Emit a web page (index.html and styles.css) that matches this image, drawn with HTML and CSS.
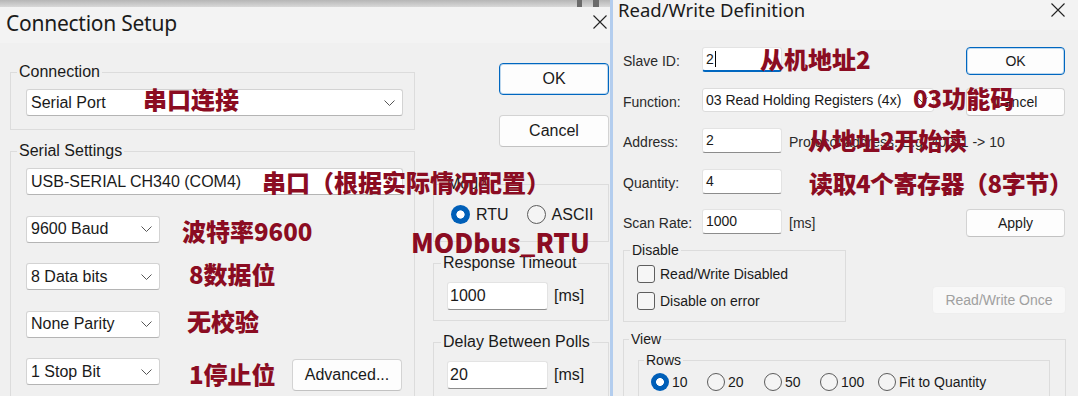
FILE: index.html
```html
<!DOCTYPE html>
<html lang="en">
<head>
    <meta charset="UTF-8">
    <meta name="viewport" content="width=device-width, initial-scale=1.0">
    <title>Modbus Poll - Connection Setup</title>
    <link rel="stylesheet" href="styles.css">
</head>
<body>
<div class="desk">
    <!-- window behind the dialogs -->
    <span class="behind-bar bar-a"></span>
    <span class="behind-bar bar-b"></span>

    <!-- Connection Setup dialog -->
    <section class="dlg conn">
        <header class="titlebar">
            <h1>Connection Setup</h1>
            <svg class="close" width="14" height="14" viewBox="0 0 14 14">
                <path d="M0.5 0.5 L13.5 13.5 M13.5 0.5 L0.5 13.5" stroke="#222" stroke-width="1.1" fill="none"/>
            </svg>
        </header>

        <div class="conn-body">
            <div class="col-left">
                <fieldset class="group g-connection">
                    <legend>Connection</legend>
                    <div class="select wide">
                        <span>Serial Port</span>
                        <svg class="chev" width="11" height="6" viewBox="0 0 11 6"><path d="M0.5 0.5 L5.5 5.5 L10.5 0.5" stroke="#555" fill="none"/></svg>
                    </div>
                </fieldset>

                <fieldset class="group g-serial">
                    <legend>Serial Settings</legend>
                    <div class="select wide">
                        <span>USB-SERIAL CH340 (COM4)</span>
                    </div>
                    <div class="select short">
                        <span>9600 Baud</span>
                        <svg class="chev" width="11" height="6" viewBox="0 0 11 6"><path d="M0.5 0.5 L5.5 5.5 L10.5 0.5" stroke="#555" fill="none"/></svg>
                    </div>
                    <div class="select short">
                        <span>8 Data bits</span>
                        <svg class="chev" width="11" height="6" viewBox="0 0 11 6"><path d="M0.5 0.5 L5.5 5.5 L10.5 0.5" stroke="#555" fill="none"/></svg>
                    </div>
                    <div class="select short">
                        <span>None Parity</span>
                        <svg class="chev" width="11" height="6" viewBox="0 0 11 6"><path d="M0.5 0.5 L5.5 5.5 L10.5 0.5" stroke="#555" fill="none"/></svg>
                    </div>
                    <div class="stop-row">
                        <div class="select short">
                            <span>1 Stop Bit</span>
                            <svg class="chev" width="11" height="6" viewBox="0 0 11 6"><path d="M0.5 0.5 L5.5 5.5 L10.5 0.5" stroke="#555" fill="none"/></svg>
                        </div>
                        <button class="btn adv">Advanced...</button>
                    </div>
                </fieldset>
            </div>

            <div class="col-right">
                <button class="btn primary">OK</button>
                <button class="btn">Cancel</button>

                <fieldset class="group g-mode">
                    <legend>Mode</legend>
                    <div class="radios">
                        <label class="radio"><span class="dot on"></span>RTU</label>
                        <label class="radio"><span class="dot"></span>ASCII</label>
                    </div>
                </fieldset>

                <fieldset class="group g-time">
                    <legend>Response Timeout</legend>
                    <div class="field-row">
                        <div class="textbox">1000</div>
                        <span>[ms]</span>
                    </div>
                </fieldset>

                <fieldset class="group g-time">
                    <legend>Delay Between Polls</legend>
                    <div class="field-row">
                        <div class="textbox">20</div>
                        <span>[ms]</span>
                    </div>
                </fieldset>
            </div>
        </div>
    </section>

    <!-- Read/Write Definition dialog -->
    <section class="dlg rw">
        <header class="titlebar">
            <h2>Read/Write Definition</h2>
            <svg class="close" width="14" height="14" viewBox="0 0 14 14">
                <path d="M0.5 0.5 L13.5 13.5 M13.5 0.5 L0.5 13.5" stroke="#222" stroke-width="1.1" fill="none"/>
            </svg>
        </header>

        <div class="rw-body">
            <div class="form">
                <span class="lbl">Slave ID:</span>
                <div class="cell"><div class="textbox focus">2<i class="caret"></i></div></div>
                <button class="btn primary">OK</button>

                <span class="lbl">Function:</span>
                <div class="cell">
                    <div class="select func">
                        <span>03 Read Holding Registers (4x)</span>
                        <svg class="chev" width="11" height="6" viewBox="0 0 11 6"><path d="M0.5 0.5 L5.5 5.5 L10.5 0.5" stroke="#555" fill="none"/></svg>
                    </div>
                </div>
                <button class="btn">Cancel</button>

                <span class="lbl">Address:</span>
                <div class="cell"><div class="textbox">2</div><span class="hint">Protocol address. E.g. 40011 -&gt; 10</span></div>
                <span></span>

                <span class="lbl">Quantity:</span>
                <div class="cell"><div class="textbox">4</div></div>
                <span></span>

                <span class="lbl">Scan Rate:</span>
                <div class="cell"><div class="textbox">1000</div><span class="hint">[ms]</span></div>
                <button class="btn">Apply</button>
            </div>

            <div class="rw-lower">
                <fieldset class="group g-disable">
                    <legend>Disable</legend>
                    <label class="check"><span class="box"></span>Read/Write Disabled</label>
                    <label class="check"><span class="box"></span>Disable on error</label>
                </fieldset>
                <button class="btn disabled">Read/Write Once</button>
            </div>

            <fieldset class="group g-view">
                <legend>View</legend>
                <fieldset class="group g-rows">
                    <legend>Rows</legend>
                    <div class="row-radios">
                        <label class="radio"><span class="dot on"></span>10</label>
                        <label class="radio"><span class="dot"></span>20</label>
                        <label class="radio"><span class="dot"></span>50</label>
                        <label class="radio"><span class="dot"></span>100</label>
                        <label class="radio"><span class="dot"></span>Fit to Quantity</label>
                    </div>
                </fieldset>
            </fieldset>
        </div>
    </section>

    <!-- red annotations written over the screenshot -->
    <span class="note n-port">串口连接</span>
    <span class="note n-com">串口（根据实际情况配置）</span>
    <span class="note n-baud">波特率9600</span>
    <span class="note n-data">8数据位</span>
    <span class="note n-parity">无校验</span>
    <span class="note n-stop">1停止位</span>
    <span class="note n-mode">MODbus_RTU</span>
    <span class="note n-slave">从机地址2</span>
    <span class="note n-func">03功能码</span>
    <span class="note n-addr">从地址2开始读</span>
    <span class="note n-qty">读取4个寄存器（8字节）</span>
</div>
</body>
</html>
```

FILE: styles.css
```css
* {
    box-sizing: border-box;
}

body {
    margin: 0;
    background: #e6e6e6;
    font-family: "Liberation Sans", Arial, sans-serif;
}

.desk {
    position: relative;
    width: 1078px;
    height: 396px;
    overflow: hidden;
    background: linear-gradient(#b6b6b6, #d8d8d8 7px, #e6e6e6 7px);
}

.behind-bar {
    position: absolute;
    top: 0;
    height: 7px;
    background: #6b6b6b;
}

.bar-a { left: 577px; width: 5px; }
.bar-b { left: 593px; width: 6px; }

/* Dialog windows */
.dlg {
    position: absolute;
    background: #f0f0f0;
    color: #1a1a1a;
}

.titlebar {
    display: flex;
    align-items: center;
    justify-content: space-between;
    background: #f3f3f3;
}

.close {
    align-self: flex-start;
    flex: none;
}

/* Buttons */
.btn {
    font-family: inherit;
    font-size: inherit;
    color: #1a1a1a;
    background: #fdfdfd;
    border: 1px solid #d3d3d3;
    border-bottom-color: #c2c2c2;
    border-radius: 4px;
    padding: 0;
}

.btn.primary {
    border: 1px solid #0067c0;
    box-shadow: inset 0 0 0 1px rgba(0, 103, 192, 0.25);
}

.btn.disabled {
    background: #f8f8f8;
    border-color: #eeeeee;
    color: #a0a0a0;
}

/* Group boxes */
.group {
    margin: 0;
    min-width: 0;
    border: 1px solid #dcdcdc;
    border-radius: 0;
}

.group legend {
    padding: 0 2px;
}

/* Inputs */
.select {
    display: flex;
    align-items: center;
    background: #fff;
    border: 1px solid #d3d3d3;
    border-bottom-color: #b4b4b4;
    border-radius: 3px;
    white-space: nowrap;
}

.select .chev {
    margin-left: auto;
    flex: none;
}

.textbox {
    flex: none;
    background: #fff;
    border: 1px solid #e3e3e3;
    border-bottom-color: #8c8c8c;
    border-radius: 3px;
    white-space: nowrap;
}

.textbox.focus {
    border-bottom: 2px solid #0067c0;
}

.caret {
    display: inline-block;
    width: 1px;
    height: 16px;
    margin-left: 1px;
    vertical-align: -3px;
    background: #000;
}

.radio,
.check {
    display: flex;
    align-items: center;
    white-space: nowrap;
}

.dot {
    flex: none;
    border-radius: 50%;
    border: 1px solid #5c5c5c;
    background: #f4f4f4;
}

.dot.on {
    border: none;
    background: radial-gradient(circle, #fff 0 3.6px, #005fb8 4.2px);
}

.box {
    flex: none;
    width: 18px;
    height: 18px;
    margin-right: 5px;
    border: 1px solid #5e5e5e;
    border-radius: 3px;
    background: #f6f6f6;
}

/* ---- Connection Setup ---- */
.conn {
    left: 0;
    top: 7px;
    width: 611px;
    height: 389px;
    font-size: 16px;
}

.conn .titlebar {
    height: 36px;
    padding: 0 4px 4px 6px;
}

.conn h1 {
    margin: 0;
    font: 400 21px/21px "Noto Sans", sans-serif;
    letter-spacing: -0.25px;
    color: #1b1b1b;
}

.conn .close {
    margin-top: 8px;
}

.conn-body {
    display: flex;
    gap: 18px;
    padding: 20px 0 0 10px;
}

.col-left {
    width: 405px;
}

.conn .group legend {
    line-height: 18px;
}

.g-connection {
    padding: 8px 11px 13px 15px;
}

.g-connection legend,
.g-serial legend {
    margin-left: -9px;
}

.g-serial {
    display: flex;
    flex-direction: column;
    align-items: flex-start;
    gap: 20.5px;
    margin-top: 12px;
    padding: 8px 11px 20px 15px;
}

.conn .select {
    height: 27px;
    padding: 0 7px 0 4px;
}

.select.wide {
    width: 377px;
}

.select.short {
    width: 134px;
}

.stop-row {
    display: flex;
    align-items: flex-start;
}

.btn.adv {
    width: 110px;
    height: 32px;
    margin: 1px 0 0 132px;
}

.col-right {
    width: 176px;
    display: flex;
    flex-direction: column;
}

.col-right .btn {
    align-self: flex-end;
    width: 110px;
    height: 32px;
}

.col-right .btn + .btn {
    margin-top: 20px;
}

.g-mode {
    margin-top: 28px;
    padding: 12px 8px 17px 17px;
}

.g-mode legend,
.g-time legend {
    margin-left: -6px;
}

.radios {
    display: flex;
    gap: 18px;
}

.conn .dot {
    width: 19px;
    height: 19px;
    margin-right: 6px;
}

.conn .dot.on {
    background: radial-gradient(circle, #fff 0 3.8px, #005fb8 4.4px);
}

.g-time {
    margin-top: 12px;
    padding: 10px 8px 10px 13px;
}

.field-row {
    display: flex;
    align-items: center;
    gap: 6px;
}

.conn .textbox {
    width: 101px;
    height: 28px;
    padding: 4px 0 0 2px;
}

/* ---- Read/Write Definition ---- */
.rw {
    left: 610px;
    top: 0;
    width: 468px;
    height: 396px;
    border-left: 3px solid #b3cdee;
    font-size: 14px;
}

.rw .titlebar {
    height: 30px;
    padding: 0 13px 10px 5px;
}

.rw h2 {
    margin: 0;
    font: 400 18.5px/18.5px "Noto Sans", sans-serif;
    color: #1b1b1b;
}

.rw .close {
    margin-top: 3px;
}

.rw-body {
    padding: 17px 12px 0 10px;
}

.form {
    display: grid;
    grid-template-columns: 79px 264px 99px;
    grid-template-rows: repeat(4, 40.5px) 29px;
    align-items: start;
}

.lbl {
    line-height: 29px;
    color: #2a2a2a;
}

.cell {
    display: flex;
    align-items: flex-start;
    gap: 7px;
}

.hint {
    line-height: 29px;
    white-space: nowrap;
    color: #2a2a2a;
}

.rw .textbox {
    width: 80px;
    height: 25px;
    padding: 3px 0 0 3px;
}

.select.func {
    width: 232px;
    height: 24px;
    padding: 0 5px 0 3px;
    border-color: #dcdcdc;
}

.form .btn {
    width: 99px;
    height: 28px;
}

.rw-lower {
    display: flex;
    align-items: flex-start;
    margin-top: 4px;
}

.rw .group legend {
    line-height: 16px;
}

.g-disable {
    width: 223px;
    display: flex;
    flex-direction: column;
    gap: 9px;
    padding: 7px 10px 11px 13px;
}

.g-disable legend {
    margin-left: -7px;
}

.btn.disabled {
    width: 134px;
    height: 28px;
    margin: 44px 0 0 auto;
}

.g-view {
    width: 443px;
    margin-top: 9px;
    padding: 5px 15px 0 14px;
}

.g-view legend {
    margin-left: -9px;
}

.g-rows {
    padding: 5px 10px 10px 12px;
}

.g-rows legend {
    margin-left: -7px;
}

.row-radios {
    display: grid;
    grid-template-columns: 56px 57px 56px 58px auto;
}

.rw .dot {
    width: 18px;
    height: 18px;
    margin-right: 3px;
}

/* ---- red annotations ---- */
.note {
    position: absolute;
    font: 900 24px/24px "Noto Sans CJK SC", sans-serif;
    color: #8b0c22;
    white-space: nowrap;
}

.n-port   { left: 143px; top: 87px; }
.n-com    { left: 262px; top: 170px; }
.n-baud   { left: 182px; top: 219px; }
.n-data   { left: 189px; top: 262px; }
.n-parity { left: 187px; top: 309px; }
.n-stop   { left: 189px; top: 362px; }
.n-mode   { left: 411px; top: 229px; font-size: 26px; line-height: 26px; }
.n-slave  { left: 760px; top: 47px; }
.n-func   { left: 913px; top: 86px; }
.n-addr   { left: 808px; top: 128px; }
.n-qty    { left: 809px; top: 171px; letter-spacing: -0.5px; }
```
